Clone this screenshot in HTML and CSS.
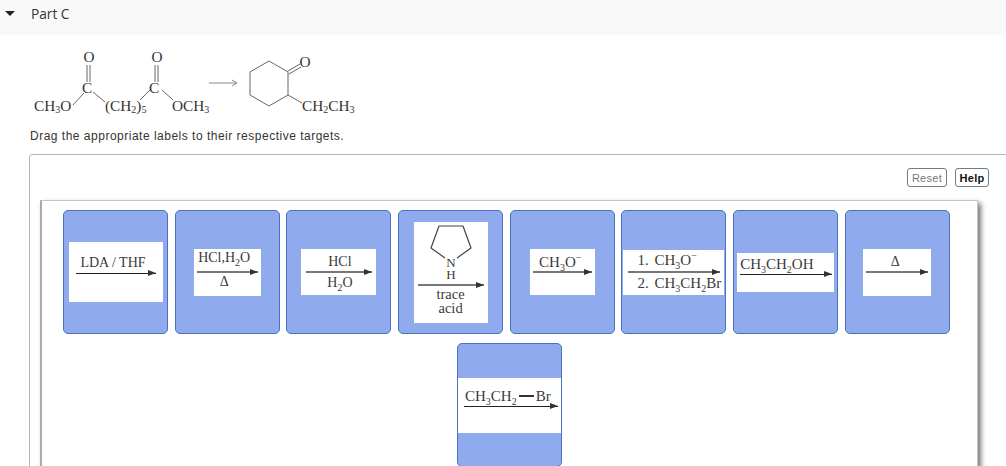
FILE: index.html
```html
<!DOCTYPE html>
<html lang="en">
<head>
<meta charset="utf-8">
<title>Part C</title>
<link rel="stylesheet" href="styles.css">
</head>
<body>
<header class="part-head">
  <span class="caret"></span>
  <span class="part-title">Part C</span>
</header>
<main class="part-body">
  <svg class="scheme" width="400" height="89" viewBox="0 0 400 89">
    <g class="bonds">
      <path d="M87 25V42M90 25V42M155 25V42M158 25V42"/>
      <path d="M73 65L84 53M93 52L105 62M140 60L150 50M162 50L173 60"/>
      <path d="M269 21L288 32L288 55L269 66L250 55L250 32Z"/>
      <path d="M288 31L300 24M289 34L301 27M288 55L302 63"/>
    </g>
    <path class="arrow-thin" d="M209 43H236M232 40L237 43L232 46"/>
    <g class="chem">
      <text x="89" y="22" text-anchor="middle">O</text>
      <text x="157" y="22" text-anchor="middle">O</text>
      <text x="87" y="53" text-anchor="middle">C</text>
      <text x="154" y="53" text-anchor="middle">C</text>
      <text x="305" y="27" text-anchor="middle">O</text>
      <text x="34" y="71">CH<tspan class="s" dy="2">3</tspan><tspan dy="-2">O</tspan></text>
      <text x="105" y="71">(CH<tspan class="s" dy="2">2</tspan><tspan dy="-2">)</tspan><tspan class="s" dy="2">5</tspan></text>
      <text x="172" y="71">OCH<tspan class="s" dy="2">3</tspan></text>
      <text x="302" y="71">CH<tspan class="s" dy="2">2</tspan><tspan dy="-2">CH</tspan><tspan class="s" dy="2">3</tspan></text>
    </g>
  </svg>
  <p class="instruction">Drag the appropriate labels to their respective targets.</p>
  <section class="panel">
    <div class="tools">
      <button class="btn btn-reset" type="button">Reset</button>
      <button class="btn btn-help" type="button">Help</button>
    </div>
    <div class="board">
      <div class="row row-first">
        <div class="card">
          <div class="label l1"><div class="t">LDA / THF</div><div class="arrow dark"></div></div>
        </div>
        <div class="card">
          <div class="label l2"><div class="t">HCl,H<sub>2</sub>O</div><div class="arrow"></div><div class="t b">&Delta;</div></div>
        </div>
        <div class="card">
          <div class="label l3"><div class="t">HCl</div><div class="arrow"></div><div class="t b">H<sub>2</sub>O</div></div>
        </div>
        <div class="card">
          <div class="label l4">
            <svg class="ring" width="74" height="60" viewBox="0 0 74 60">
              <path d="M31 36L17 26L25 4H49L57 26L43 36" fill="none"/>
              <text x="37" y="45" text-anchor="middle">N</text>
              <text x="37" y="57" text-anchor="middle">H</text>
            </svg>
            <div class="arrow"></div>
            <div class="t tight">trace</div>
            <div class="t tight">acid</div>
          </div>
        </div>
        <div class="card">
          <div class="label l5"><div class="t">CH<sub>3</sub>O<sup>&minus;</sup></div><div class="arrow"></div></div>
        </div>
        <div class="card">
          <div class="label l6"><div class="t">1. CH<sub>3</sub>O<sup>&minus;</sup></div><div class="arrow"></div><div class="t b">2. CH<sub>3</sub>CH<sub>2</sub>Br</div></div>
        </div>
        <div class="card">
          <div class="label l7"><div class="t">CH<sub>3</sub>CH<sub>2</sub>OH</div><div class="arrow dark"></div></div>
        </div>
        <div class="card">
          <div class="label l8"><div class="t">&Delta;</div><div class="arrow"></div></div>
        </div>
      </div>
      <div class="row row-second">
        <div class="card">
          <div class="label l9"><div class="t">CH<sub>3</sub>CH<sub>2</sub><span class="dash"></span>Br</div><div class="arrow dark"></div></div>
        </div>
      </div>
    </div>
  </section>
</main>
</body>
</html>
```
FILE: styles.css
```css
html, body {
  margin: 0;
  height: 466px;
  overflow: hidden;
  background: #fff;
}
body {
  font-family: "Liberation Sans", Arial, sans-serif;
  color: #333;
}
.part-head {
  height: 35px;
  background: #f9f9f9;
  display: flex;
  align-items: flex-start;
}
.caret {
  width: 0;
  height: 0;
  margin: 11px 0 0 5px;
  border-left: 5px solid transparent;
  border-right: 5px solid transparent;
  border-top: 5px solid #222;
}
.part-title {
  margin: 5px 0 0 16px;
  font: 13.7px/17px "Open Sans", sans-serif;
  color: #333;
}
.part-body {
  display: flex;
  flex-direction: column;
}
.scheme {
  display: block;
  margin-top: 5px;
}
.bonds path {
  fill: none;
  stroke: #666;
  stroke-width: 1;
}
.arrow-thin {
  fill: none;
  stroke: #888;
  stroke-width: 1;
}
.chem text {
  font: 15.3px "Liberation Serif", serif;
  fill: #333;
}
.chem .s {
  font-size: 10px;
}
.instruction {
  margin: 0 0 0 30px;
  font-size: 12px;
  line-height: 14px;
  letter-spacing: 0.5px;
  color: #333;
  height: 25px;
}
.panel {
  margin-left: 29px;
  width: 1000px;
  height: 320px;
  box-sizing: border-box;
  border: 1px solid #b5b5b5;
  border-radius: 3px 0 0 0;
  padding: 13px 0 0 10px;
}
.tools {
  width: 949px;
  height: 19px;
  display: flex;
  justify-content: flex-end;
  gap: 8px;
}
.btn {
  height: 19px;
  box-sizing: border-box;
  padding: 0;
  background: #fff;
  border: 1px solid #6c7d87;
  border-radius: 3px;
  font: 11px/16px "Liberation Sans", Arial, sans-serif;
  letter-spacing: 0.3px;
}
.btn-reset {
  width: 40px;
  color: #777;
}
.btn-help {
  width: 34px;
  font-weight: bold;
  color: #111;
}
.board {
  margin-top: 13px;
  width: 938px;
  height: 300px;
  box-sizing: border-box;
  background: #fff;
  border: 1px solid #c4c4c4;
  border-left: 2px solid #aaa;
  border-bottom: 0;
  box-shadow: 3px 3px 5px #777;
  padding-top: 8px;
  display: flex;
  flex-direction: column;
  gap: 9px;
}
.row {
  display: flex;
  gap: 6.7px;
}
.row-first {
  padding-left: 21px;
  padding-top: 1px;
}
.row-second {
  justify-content: center;
}
.card {
  width: 105px;
  height: 124px;
  box-sizing: border-box;
  background: #8fabee;
  border: 1px solid #4a72c0;
  border-radius: 5px;
  display: flex;
  align-items: center;
  justify-content: center;
}
.label {
  flex: none;
  box-sizing: border-box;
  background: #fff;
  display: flex;
  flex-direction: column;
  align-items: center;
  color: #3a3a3a;
}
.t {
  font: 14px/16px "Liberation Serif", serif;
  white-space: nowrap;
}
.t sub, .t sup {
  font-size: 10px;
  line-height: 0;
}
.t.tight {
  font-size: 14.5px;
  line-height: 14px;
}
.arrow {
  position: relative;
  flex: none;
  height: 2px;
  background: #777;
}
.arrow::after {
  content: "";
  position: absolute;
  right: 0;
  top: -2px;
  border-left: 8px solid #333;
  border-top: 3px solid transparent;
  border-bottom: 3px solid transparent;
}
.arrow.dark {
  background: #222;
  height: 1px;
}
.arrow.dark::after {
  top: -3px;
}
.l1 { width: 94px; height: 60px; padding-top: 13px; }
.l1 .t { margin-right: 5px; }
.l1 .arrow { width: 80px; margin-top: 2px; }
.l2 { width: 67px; height: 47px; padding-top: 1px; }
.l2 .t { margin-right: 6px; }
.l2 .arrow { width: 61px; margin-top: 5px; }
.l2 .t.b { margin-top: 1px; }
.l3 { width: 75px; height: 46px; padding-top: 5px; }
.l3 .t { margin-left: 2px; }
.l3 .arrow { width: 66px; margin-top: 1px; }
.l3 .t.b { margin-top: 2px; }
.l4 { width: 74px; height: 101px; }
.l4 .arrow { width: 66px; margin: 2px 0 1px; }
.l4 .t.tight + .t.tight { line-height: 15px; }
.l5 { width: 65px; height: 46px; padding-top: 5px; }
.l5 .t { font-size: 15px; margin-right: 4px; }
.l5 .arrow { width: 59px; margin-top: 1px; }
.l6 { width: 101px; height: 45px; padding-top: 2px; align-items: flex-start; }
.l6 .t { font-size: 15px; margin-left: 14px; word-spacing: 2px; }
.l6 .arrow { width: 92px; margin: 3px 0 0 5px; }
.l6 .t.b { margin-top: 2px; }
.l7 { width: 97px; height: 39px; padding-top: 3px; align-items: flex-start; }
.l7 .t { font-size: 15px; margin-left: 3px; }
.l7 .arrow { width: 92px; margin: 2px 0 0 3px; }
.l8 { width: 68px; height: 47px; padding-top: 5px; }
.l8 .t { margin-right: 4px; }
.l8 .arrow { width: 62px; margin-top: 1px; }
.l9 { width: 103px; height: 55px; padding-top: 10px; align-items: flex-start; }
.l9 .t { font-size: 15px; margin-left: 7px; }
.l9 .arrow { width: 94px; margin: 2px 0 0 6px; }
.dash {
  display: inline-block;
  width: 15px;
  height: 2px;
  background: #333;
  vertical-align: 4px;
  margin: 0 2px;
}
.ring path {
  stroke: #444;
  stroke-width: 1.2;
  stroke-linejoin: round;
}
.ring text {
  font: 13px "Liberation Serif", serif;
  fill: #3a3a3a;
}
```
